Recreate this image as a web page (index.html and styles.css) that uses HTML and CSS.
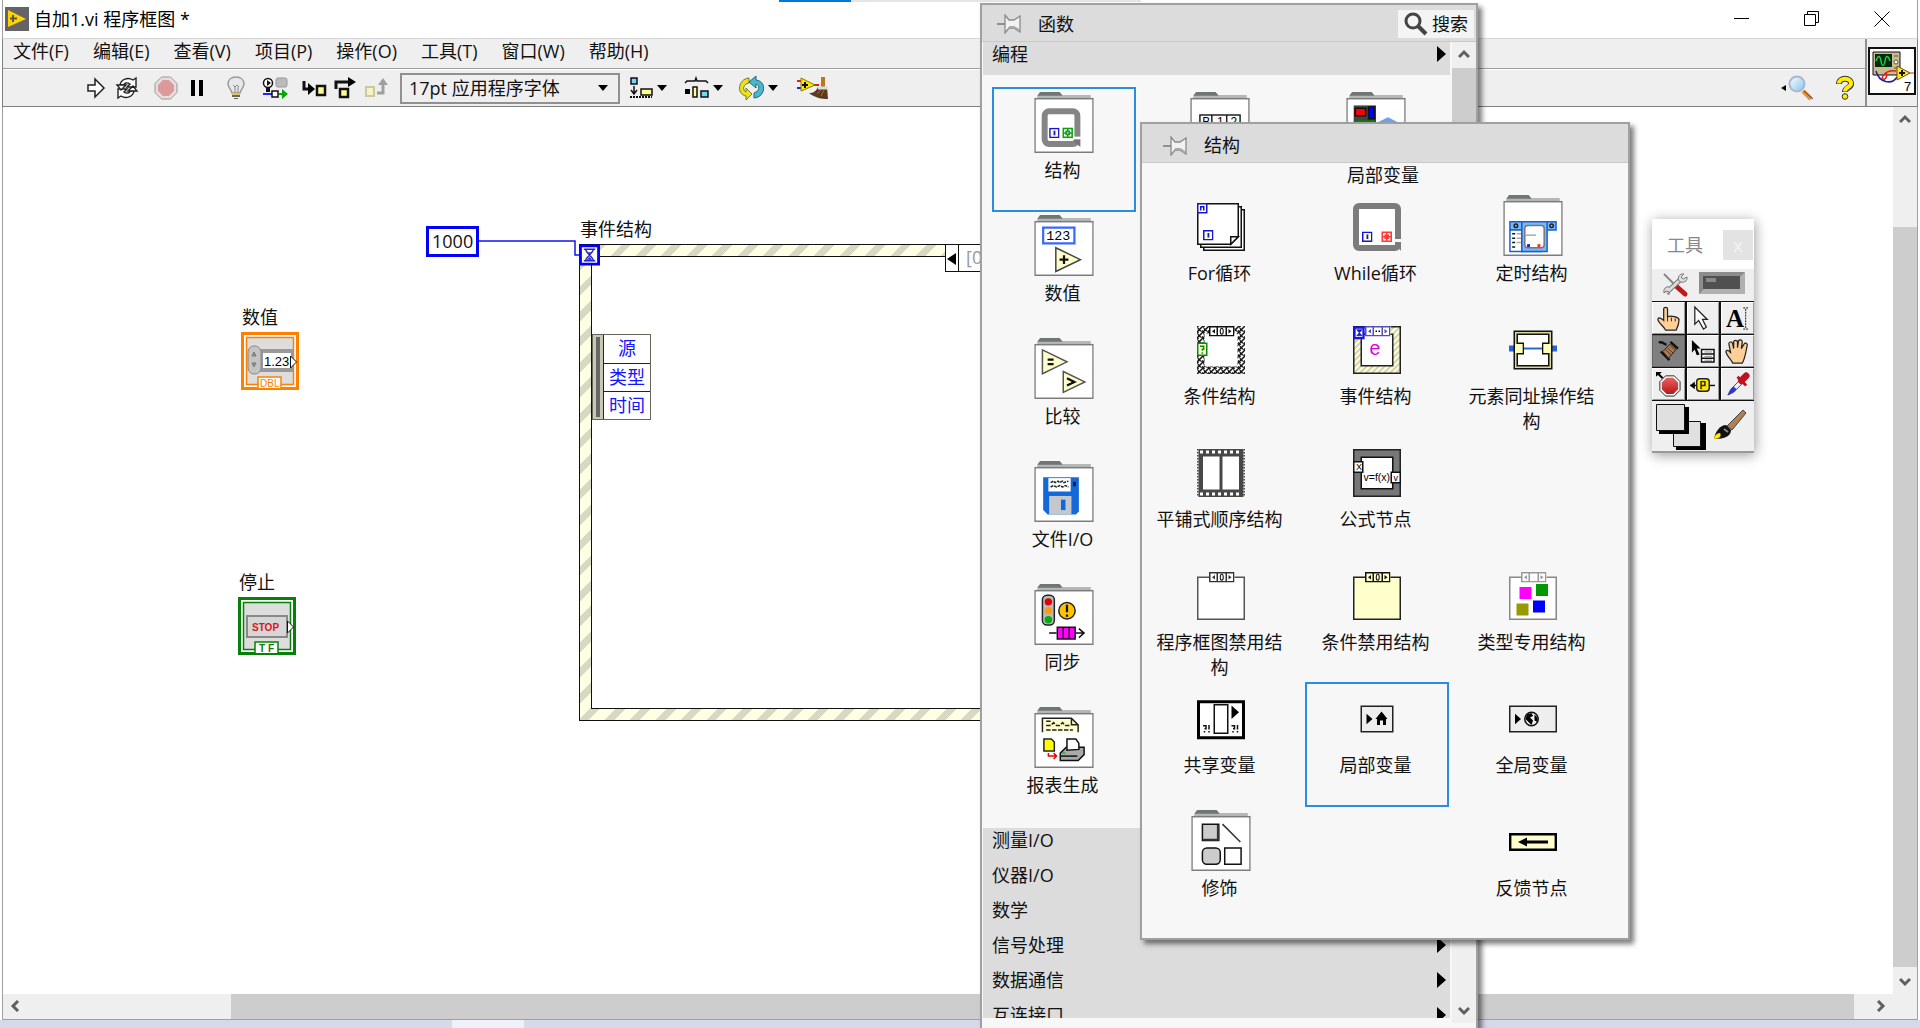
FILE: index.html
```html
<!DOCTYPE html>
<html lang="zh-CN">
<head>
<meta charset="utf-8">
<title>自加1.vi 程序框图 *</title>
<link rel="stylesheet" href="styles.css">
</head>
<body>
<svg class="defs" aria-hidden="true">
  <defs>
    <pattern id="hatch" width="4" height="4" patternUnits="userSpaceOnUse"><rect width="4" height="4" fill="#ffffcc"/><path d="M-1 1L1-1M0 4L4 0M3 5L5 3" stroke="#ccc" stroke-width="1.2"/></pattern>
    <pattern id="knit" width="4" height="4" patternUnits="userSpaceOnUse"><rect width="4" height="4" fill="#fff"/><path d="M0 4L4 0M0 1L1 0M3 4L4 3" stroke="#111" stroke-width="1"/><path d="M0.500 1.500l2 2" stroke="#111" stroke-width=".9"/></pattern>
    <linearGradient id="red" x2="0" y2="1"><stop stop-color="#e86060"/><stop offset="1" stop-color="#b81818"/></linearGradient>
    <linearGradient id="lens" x2="1" y2="1"><stop stop-color="#fff"/><stop offset="1" stop-color="#7cc4ee"/></linearGradient>
  </defs>
  <symbol id="folder" viewBox="0 0 40 41"><path d="M2 3l2-3h13l2 2h19v2H2z" fill="#b4b8b6"/><path d="M2 2.500L4 0h13l2 2.500z" fill="#6f7674"/><rect x=".5" y="4.500" width="39" height="36" fill="#fff" stroke="#7c7c7c"/></symbol>
  <symbol id="ibox" viewBox="0 0 7 7"><path d="M.5.5h6v6h-6z" fill="#ffffcc" stroke="#1414d8"/><path d="M3 2h1.200v3H3z" fill="#1414d8"/></symbol>
  <symbol id="sel" viewBox="0 0 17 7"><path d="M.5.5h16v6H.5zM5.500.5v6M11.500.5v6" fill="none" stroke="currentColor"/><path d="M4 2v3L2 3.500zM13 2v3l2-1.500z" fill="currentColor"/></symbol>
  <symbol id="sand" viewBox="0 0 22 22"><path d="M1.500 1.500h19v19h-19z" fill="#ffffe0" stroke="#00f" stroke-width="3"/><path d="M5 5h12M5 17h12M7 5c0 4 8 8 8 12M15 5c0 4-8 8-8 12" fill="none" stroke="#2222d0" stroke-width="1.500"/><path d="M8 16l3-3 3 3zM9 8h4l-2 2z" fill="#2222d0"/></symbol>
  <symbol id="pin" viewBox="0 0 24 20"><path d="M0 10h8" stroke="#909090" stroke-width="2"/><path d="M8 1v18l4-5h5l6 4V2l-6 4h-5z" fill="#f2f2f2" stroke="#8a8a8a" stroke-width="1.300"/><path d="M12 13h5l5 3" stroke="#aaa" stroke-width="2" fill="none"/></symbol>
  <symbol id="right" viewBox="0 0 9 16"><path d="M0 0l9 8-9 8z"/></symbol>
  <symbol id="down" viewBox="0 0 10 6"><path d="M0 0h10L5 6z"/></symbol>
  <symbol id="chev" viewBox="0 0 12 10"><path d="M1 8l5-5 5 5" fill="none" stroke="#606060" stroke-width="3"/></symbol>
</svg>

<div class="app">
  <header class="titlebar">
    <svg class="logo" viewBox="0 0 24 24"><path fill="#636368" d="M0 0h24v24H0z"/><path d="M3 3l18 9L3 20z" fill="#ffd200"/><path d="M8 8v7M5 11.500h7" stroke="#555" stroke-width="2"/></svg>
    <h1>自加1.vi 程序框图 *</h1>
    <div class="progress"><span></span></div>
    <div class="winbtns">
      <button aria-label="最小化"><svg width="16" height="16"><path d="M0 7.500h15" stroke="#000"/></svg></button>
      <button aria-label="还原"><svg width="16" height="16" fill="none" stroke="#000"><path d="M.5 3.500h11v11H.5zM3.500 3V.5h11v11H12"/></svg></button>
      <button aria-label="关闭"><svg width="16" height="16"><path d="M.5.500l15 15M15.500.500l-15 15" stroke="#000"/></svg></button>
    </div>
  </header>

  <div class="bars">
    <div class="barcol">
      <nav class="menubar">
        <button>文件(F)</button><button>编辑(E)</button><button>查看(V)</button><button>项目(P)</button><button>操作(O)</button><button>工具(T)</button><button>窗口(W)</button><button>帮助(H)</button>
      </nav>
      <div class="toolbar">
        <div class="group">
          <button aria-label="运行"><svg width="20" height="22" viewBox="0 0 20 22"><path d="M2 8h7V2l9 9-9 9v-6H2z" fill="#fff" stroke="#222" stroke-width="1.500"/></svg></button>
          <button aria-label="连续运行"><svg width="26" height="22" viewBox="0 0 26 22" fill="#fff" stroke="#222" stroke-width="1.400"><path d="M6 8c1-6 8-8 13-5l3-2v9h-9l3-3c-3-2-6-1-6 1z"/><path d="M20 14c-1 6-8 8-13 5l-3 2v-9h9l-3 3c3 2 6 1 6-1z"/><path d="M3 8h9l-5 5zM23 14h-9l5-5z"/></svg></button>
        </div>
        <div class="group">
          <button aria-label="中止执行"><svg width="24" height="24" viewBox="0 0 24 24"><path d="M7.500 1h9L23 7.500v9L16.500 23h-9L1 16.500v-9z" fill="#e8dcdc" stroke="#999"/><path d="M9 4h6l5 5v6l-5 5H9l-5-5V9z" fill="#dc9a9a"/></svg></button>
          <button aria-label="暂停"><svg width="14" height="16"><path d="M1 0h4v16H1zM9 0h4v16H9z"/></svg></button>
        </div>
        <div class="group"><button aria-label="高亮显示执行过程"><svg width="20" height="24" viewBox="0 0 20 24"><path d="M10 1c5 0 8 3 8 7 0 3-3 5-4 9H6c-1-4-4-6-4-9 0-4 3-7 8-7z" fill="#e8e8e8" stroke="#999" stroke-width="1.500"/><path d="M7 9l2 2 2-2 2 2M9 11v6M12 11v6" stroke="#888" fill="none"/><path d="M6 17h8v2H6z" fill="#e6c34a"/><path d="M6 19h8v2H6zM8 22h4v1H8z" fill="#666"/></svg></button></div>
        <div class="group"><button aria-label="保存连线值"><svg width="26" height="22" viewBox="0 0 26 22"><circle cx="6" cy="6" r="4.500" fill="#fff" stroke="#111" stroke-width="1.500"/><path d="M5 3v6l4-3zM4 11v4h4v-4" fill="#111"/><rect x="14" y="1" width="11" height="9" rx="2" fill="#bbb" stroke="#999"/><path d="M1 17h9" stroke="#22f" stroke-width="2"/><rect x="10" y="14" width="6" height="6" fill="#fff" stroke="#111" stroke-width="1.500"/><path d="M17 16h3v-4l6 5-6 5v-4h-3z" fill="#0a0"/></svg></button></div>
        <div class="group">
          <button aria-label="单步步入"><svg width="26" height="20" viewBox="0 0 26 20"><path d="M3 3v8h5" stroke="#111" stroke-width="3" fill="none"/><path d="M7 5l7 6-7 6z"/><rect x="16" y="8" width="8" height="9" fill="#ffff90" stroke="#111" stroke-width="2.500"/></svg></button>
          <button aria-label="单步步过"><svg width="24" height="22" viewBox="0 0 24 22"><path d="M3 12V5h13" stroke="#111" stroke-width="3" fill="none"/><path d="M15 0l8 5-8 5z"/><rect x="7" y="12" width="8" height="8" fill="#ffff90" stroke="#111" stroke-width="2.500"/></svg></button>
          <button aria-label="单步步出"><svg width="24" height="20" viewBox="0 0 24 20"><rect x="2" y="9" width="8" height="9" fill="#f6f4c4" stroke="#ccc8a0" stroke-width="2"/><path d="M13 15h6V6" stroke="#a0a0a0" stroke-width="3" fill="none"/><path d="M14 7l5-7 5 7z" fill="#a0a0a0"/></svg></button>
        </div>
        <label class="fontpick"><select aria-label="字体"><option>17pt 应用程序字体</option></select><svg width="10" height="6"><use href="#down"/></svg></label>
        <div class="group wide">
          <button aria-label="对齐对象"><svg width="24" height="22" viewBox="0 0 24 22"><path d="M1 1h6v6H1z" fill="#6cdcf4" stroke="#111" stroke-width="1.500"/><path d="M4 9v7M1 13l3 4 3-4" stroke="#111" stroke-width="1.500" fill="none"/><path d="M11 12h11v6H11z" fill="#ffff90" stroke="#111" stroke-width="1.500"/><path d="M0 20h22" stroke="#111" stroke-width="2" stroke-dasharray="2 1"/></svg><svg width="10" height="6"><use href="#down"/></svg></button>
          <button aria-label="分布对象"><svg width="26" height="22" viewBox="0 0 26 22"><path d="M1 6l2-2h8l1-3 1 3h9l2 2" stroke="#111" stroke-width="1.500" fill="none"/><path d="M1 12h5v5H1z"/><path d="M9 10h4v10H9z" fill="#ffff90" stroke="#111" stroke-width="1.500"/><path d="M17 14h7v6h-7z" fill="#6cdcf4" stroke="#111" stroke-width="1.500"/></svg><svg width="10" height="6"><use href="#down"/></svg></button>
          <button aria-label="重新排序"><svg width="26" height="24" viewBox="0 0 26 24"><path d="M10 2C-1 3-3 18 7 20v4l6-6-6-6v4c-4-2-3-8 3-9z" fill="#e8e020" stroke="#777a20"/><path d="M15 22c12-1 13-17 2-18V0l-7 6 7 6V8c4 1 4 7-2 9z" fill="#4ab8cc" stroke="#20687a"/></svg><svg width="10" height="6"><use href="#down"/></svg></button>
          <button aria-label="整理程序框图"><svg width="32" height="24" viewBox="0 0 32 24"><path d="M0 5h5M15 9h7" stroke="#e02020" stroke-width="2"/><path d="M0 12h5" stroke="#2020e0" stroke-width="2"/><path d="M4 2l14 7L4 15z" fill="#ffe800" stroke="#887700"/><path d="M8 6v6M5 9h6" stroke="#111" stroke-width="2"/><path d="M26 1v10" stroke="#b87820" stroke-width="4"/><path d="M21 11h9l1 12c-6 0-13-1-19-6 5 0 7-2 9-6z" fill="#5c3a1c"/><path d="M21 12h10" stroke="#ddd" stroke-width="3"/><path d="M20 18l4-4M24 20l3-6" stroke="#9a7040"/></svg></button>
        </div>
        <div class="toolright">
          <button aria-label="搜索"><svg width="34" height="26" viewBox="0 0 34 26"><path d="M1 13l5-3v6z"/><path d="M23 16l8 8" stroke="#e09040" stroke-width="4.500"/><path d="M24 16l9 8" stroke="#444"/><circle cx="17" cy="9" r="7.500" fill="url(#lens)" stroke="#a8b8d0" stroke-width="2"/></svg></button>
          <button aria-label="帮助"><svg width="18" height="24" viewBox="0 0 18 24"><path d="M3 8c0-7 12-7 12 0 0 4-6 3-6 8" fill="none" stroke="#333" stroke-width="6"/><path d="M3 7.500c0-6.500 12-6.500 12 0 0 4-6 3-6 8" fill="none" stroke="#ffee00" stroke-width="4"/><circle cx="9" cy="20.500" r="2.800" fill="#ffee00" stroke="#333"/></svg></button>
        </div>
      </div>
    </div>
    <div class="vibox"><svg viewBox="0 0 48 48"><path d="M1 1h46v46H1z" fill="#fff" stroke="#111" stroke-width="2"/><path d="M5 5h27v23H5z" fill="#c8bc90" stroke="#111"/><path d="M7 7h17v13H7z" fill="#052a10"/><path d="M8 14c2-6 4-6 5 0s3 6 4 0 3-6 5 0" fill="none" stroke="#20d040" stroke-width="1.500"/><circle cx="28" cy="15" r="2" fill="#fff" stroke="#555"/><path d="M26 9h4M26 21h4" stroke="#555"/><path d="M8 24c3 12 16 14 21 6" fill="none" stroke="#2020a0" stroke-width="1.500"/><path d="M14 31c2-6 8-8 14-7M14 31c2 3 6 0 4-5" fill="none" stroke="#e02020" stroke-width="1.500"/><path d="M29 19l13 7-13 7z" fill="#ffe820" stroke="#665500"/><path d="M34 23v6M31 26h6" stroke="#111" stroke-width="2"/><path d="M42 26h4" stroke="#e02020"/><text x="36" y="44" class="t13">7</text></svg></div>
  </div>

  <main class="workspace">
    <section class="canvas" aria-label="程序框图">
      <svg class="wire" width="160" height="40"><path d="M0 1h97v14h6" fill="none" stroke="#1414e8" stroke-width="1.500"/></svg>
      <div class="node const">1000</div>
      <div class="node evlabel">事件结构</div>
      <div class="node frame"><div class="inner"></div></div>
      <div class="node selector"><svg width="12" height="26"><path d="M10 8v12L1 14z"/></svg><span>[0]</span></div>
      <svg class="node sand"><use href="#sand"/></svg>
      <div class="node evdata"><i></i><ul><li>源</li><li>类型</li><li>时间</li></ul></div>

      <div class="node num"><span>数值</span>
        <svg width="58" height="58" viewBox="0 0 58 58"><path d="M1.500 1.500h55v55h-55z" fill="#fff" stroke="#ff8000" stroke-width="3"/><path d="M5.500 5.500h47v47h-47z" fill="#ddd" stroke="#ff8000" stroke-width="1.500"/><rect x="16" y="17" width="36" height="23" fill="#999"/><rect x="7" y="14" width="13" height="28" rx="6" fill="#c4c4c4" stroke="#888"/><path d="M11 24l2-4 2 4zM11 31l2 4 2-4z" fill="#999" stroke="#777"/><path d="M22 21h28v15H22z" fill="#fff"/><text x="23" y="34" class="t13">1.23</text><path d="M49.500 24v12l6-6z" fill="#fff" stroke="#111"/><path d="M17 56V45h23v11" fill="#fff" stroke="#ff8000" stroke-width="1.500"/><text x="19" y="55" class="t10 or">DBL</text></svg></div>
      <div class="node stop"><span>停止</span>
        <svg width="58" height="58" viewBox="0 0 58 58"><path d="M1.500 1.500h55v55h-55z" fill="#fff" stroke="#078007" stroke-width="3"/><path d="M5.500 5.500h47v47h-47z" fill="#ddd" stroke="#078007" stroke-width="1.500"/><path d="M9 19h40v21H9z" fill="#d6d6d6" stroke="#888" stroke-width="2"/><text x="14" y="34" class="t10 bold rd">STOP</text><path d="M49.500 24v12l6-6z" fill="#fff" stroke="#111"/><path d="M17 56V45h23v11" fill="#fff" stroke="#078007" stroke-width="1.500"/><text x="21" y="55" class="t10 bold gr">T F</text></svg></div>
    </section>
    <div class="vscroll"><b><svg width="12" height="10"><use href="#chev"/></svg></b><i></i><b><svg class="r180" width="12" height="10"><use href="#chev"/></svg></b></div>
    <div class="hscroll"><b><svg class="r270" width="12" height="10"><use href="#chev"/></svg></b><i></i><b><svg class="r90" width="12" height="10"><use href="#chev"/></svg></b></div>
  </main>
  <footer class="taskbar"><i></i></footer>
</div>

<aside class="palette functions" aria-label="函数">
  <header><svg width="24" height="20"><use href="#pin"/></svg><h2>函数</h2>
    <button class="search"><svg width="24" height="24" viewBox="0 0 24 24"><circle cx="9" cy="9" r="7" fill="none" stroke="#444" stroke-width="3"/><path d="M14 14l8 8" stroke="#444" stroke-width="4"/></svg>搜索</button></header>
  <div class="fbody">
    <div class="fmain">
      <button class="cat first"><span>编程</span><svg width="9" height="16"><use href="#right"/></svg></button>
      <div class="cells">
        <button class="cell on"><svg viewBox="0 0 40 41"><use href="#folder" width="40" height="41"/><rect x="7" y="13" width="22" height="22" rx="3" fill="#fff" stroke="#858585" stroke-width="4"/><path d="M26 30h6v2h-6z" fill="#fff"/><path d="M27 32h4v5l-5-4z" fill="#777"/><use href="#ibox" x="10" y="24" width="7" height="7"/><path d="M19 24h7v7h-7z" fill="#10a010"/><path d="M20.500 27v-1.500H22M23 25.500h1.500V27M24.500 28v1.500H23M22 29.500h-1.500V28M22 27.500h1" stroke="#fff" fill="none" stroke-width=".9"/></svg><span>结构</span></button>
        <button class="cell" aria-label="数组"><svg viewBox="0 0 40 41"><use href="#folder" width="40" height="41"/><path d="M6.500 15.500h27v10h-27zM14.500 15v10M24.500 15v10" fill="#fff" stroke="#222"/><text x="8" y="23" class="t8">B</text><text x="18" y="23" class="t8">1</text><text x="27" y="23" class="t8">2</text></svg></button>
        <button class="cell" aria-label="簇"><svg viewBox="0 0 40 41"><use href="#folder" width="40" height="41"/><path d="M5 9h15v20H5z" fill="#444"/><path d="M6 11h7v5H6z" fill="#f00" stroke="#111"/><path d="M15 10h4v8h-4z" fill="#00f" stroke="#111"/><path d="M6 19h13v4H6z" fill="#080"/><path d="M22 20l6-3 6 3v6H22z" fill="#6aa4f0"/></svg></button>
        <button class="cell"><svg viewBox="0 0 40 41"><use href="#folder" width="40" height="41"/><path d="M6 8.500h21v10.500H6z" fill="#fff" stroke="#3868ff" stroke-width="1.500"/><text x="8" y="17" class="t9 mono">123</text><path d="M14.500 22v16L31 30z" fill="#ffffcc" stroke="#444"/><path d="M20 27v6M17 30h6" stroke="#111" stroke-width="1.500"/></svg><span>数值</span></button>
        <i></i><i></i>
        <button class="cell"><svg viewBox="0 0 40 41"><use href="#folder" width="40" height="41"/><path d="M5.500 8v16L22 16z" fill="#ffffcc" stroke="#555"/><path d="M9 14.500h4M9 17.500h4" stroke="#111" stroke-width="1.500"/><path d="M19.500 22.500v14L34 29.500z" fill="#ffffcc" stroke="#555"/><path d="M22 27l5 2.500-5 2.500" fill="none" stroke="#111" stroke-width="1.500"/></svg><span>比较</span></button>
        <i></i><i></i>
        <button class="cell"><svg viewBox="0 0 40 41"><use href="#folder" width="40" height="41"/><path d="M6 11h24v23l-2 2H9l-3-3z" fill="#1468d8"/><path d="M9.500 11.500h15v9h-15z" fill="#fff"/><path d="M11 14.500l2-1 1 1 2-1 1 1 2-1 1 1 3-1M11 17.500l2-1 2 1 2-1 2 1 2-1 2 1" stroke="#222" fill="none" stroke-dasharray="2 .6"/><path d="M10 23.500h15V36H10z" fill="#c4c8cc"/><path d="M18 26h3v7h-3z" fill="#1468d8"/><path d="M26 14h2v3h-2z" fill="#124"/></svg><span>文件I/O</span></button>
        <i></i><i></i>
        <button class="cell"><svg viewBox="0 0 40 41"><use href="#folder" width="40" height="41"/><rect x="5.500" y="7.500" width="8" height="20" rx="3" fill="#bbb" stroke="#222"/><circle cx="9.500" cy="12" r="2.500" fill="#e00000"/><circle cx="9.500" cy="18" r="2.500" fill="#ff9a10"/><circle cx="9.500" cy="24" r="2.500" fill="#00b010"/><circle cx="22" cy="18" r="5.500" fill="#ffc400" stroke="#222"/><path d="M22 14v5M22 20.500v1.500" stroke="#111" stroke-width="1.500"/><path d="M10 33h5M28 33h5M30 30l3.500 3-3.500 3" stroke="#111" fill="none"/><path d="M15.500 29h12v8h-12zM19.500 29v8M23.500 29v8" fill="#f0f" stroke="#111"/></svg><span>同步</span></button>
        <i></i><i></i>
        <button class="cell"><svg viewBox="0 0 40 41"><use href="#folder" width="40" height="41"/><path d="M5.500 17V7.500H25l4.500 4.500v5z" fill="#ffffcc"/><path d="M5.500 17V7.500H25l4.500 4.500v5M25 7.500V12h4.500" fill="none" stroke="#222"/><path d="M8 9.500h3M8 12.500h3l2-2 2 2h2l2-2 2 2h3M8 15.500h18" stroke="#222" stroke-dasharray="3 1" fill="none"/><path d="M6.500 21.500h5l2 2v6h-7z" fill="#ff0" stroke="#222"/><path d="M9.500 31v2h5M13 31l2 2-2 2" stroke="#e00" fill="none"/><path d="M17.500 31l4-4h12v5l-4 4h-12z" fill="#aaa" stroke="#111"/><path d="M22 29v-7.500h6l2 3v4z" fill="#fff" stroke="#111"/><path d="M18 33h11" stroke="#111"/><path d="M19 31h2" stroke="#0c0"/></svg><span>报表生成</span></button>
      </div>
      <button class="cat"><span>测量I/O</span><svg width="9" height="16"><use href="#right"/></svg></button>
      <button class="cat"><span>仪器I/O</span><svg width="9" height="16"><use href="#right"/></svg></button>
      <button class="cat"><span>数学</span><svg width="9" height="16"><use href="#right"/></svg></button>
      <button class="cat"><span>信号处理</span><svg width="9" height="16"><use href="#right"/></svg></button>
      <button class="cat"><span>数据通信</span><svg width="9" height="16"><use href="#right"/></svg></button>
      <button class="cat"><span>互连接口</span><svg width="9" height="16"><use href="#right"/></svg></button>
    </div>
    <div class="vscroll pscroll"><b><svg width="12" height="10"><use href="#chev"/></svg></b><i></i><b><svg class="r180" width="12" height="10"><use href="#chev"/></svg></b></div>
  </div>
</aside>

<aside class="palette structures" aria-label="结构">
  <header><svg width="24" height="20"><use href="#pin"/></svg><h2>结构</h2></header>
  <p class="hint">局部变量</p>
  <div class="cells">
    <button class="cell"><svg class="s" viewBox="0 0 32 32"><path d="M4.500 4.500h27v27h-27z" fill="#fff" stroke="#111"/><path d="M2.500 2.500h27v27h-27z" fill="#fff" stroke="#111"/><path d="M.5.5h27v22l-5 5H.5z" fill="#fff" stroke="#111"/><path d="M27.500 22.500h-5v5z" fill="#fff" stroke="#111"/><path d="M.5.5h6v6h-6z" fill="#ffffcc" stroke="#1414d8"/><path d="M2.500 5V2.500h2V5" fill="none" stroke="#1414d8"/><use href="#ibox" x="4" y="18" width="7" height="7"/></svg><span>For循环</span></button>
    <button class="cell"><svg class="s" viewBox="0 0 32 32"><rect x="2" y="2" width="28" height="28" rx="2" fill="#fff" stroke="#7c7c7c" stroke-width="4"/><path d="M27 24h5v2h-5z" fill="#f7f7f7"/><path d="M28 27h4v5z" fill="#7c7c7c"/><use href="#ibox" x="6" y="19" width="7" height="7"/><path d="M19 19h7v7h-7z" fill="#ff3838"/><path d="M20.500 22v-1.500H22M23 20.500h1.500V22M24.500 23v1.500H23M22 24.500h-1.500V23" stroke="#fff" stroke-width=".9" fill="none"/></svg><span>While循环</span></button>
    <button class="cell"><svg viewBox="0 0 40 41"><use href="#folder" width="40" height="41"/><path d="M4.500 18h31v5.500h-31z" fill="#7ab8f4" stroke="#1860d8"/><path d="M4.500 23.500h8V38h-8z" fill="#fff" stroke="#1860d8"/><path d="M6 26h2M6 29h2M6 32h2M6 35h2" stroke="#111"/><path d="M9 26h3M9 29h3M9 32h3" stroke="#aaa"/><path d="M12.500 18h13v20h-13z" fill="#7ab8f4" stroke="#1860d8"/><path d="M12.500 18h17v20h-17z" fill="#7ab8f4" stroke="#1860d8"/><rect x="14.500" y="20.500" width="13" height="15" rx="2" fill="#fff" stroke="#777"/><path d="M15 27h7" stroke="#aaa"/><path d="M16 33h2v2h-2z" fill="#22d"/><path d="M23 33h2v2h-2z" fill="#f33"/><circle cx="8.500" cy="20.700" r="1.200" fill="none" stroke="#222"/><circle cx="32.500" cy="20.700" r="1.200" fill="none" stroke="#222"/></svg><span>定时结构</span></button>

    <button class="cell"><svg class="s" viewBox="0 0 32 32"><path d="M0 0h32v32H0z" fill="url(#knit)"/><path d="M5 5h22v22H5z" fill="#fff"/><path d="M8 0h17v7H8z" fill="#fff"/><use href="#sel" x="8" width="17" height="7"/><ellipse cx="16.500" cy="3.500" rx="1" ry="2" fill="none" stroke="#111" stroke-width=".7"/><path d="M.5 11.500h6v8h-6z" fill="#ffffcc" stroke="#0a8a0a"/><path d="M2 13.500h2.500v2H3.500v1M3.500 17.500v1" stroke="#0a8a0a" fill="none" stroke-width=".9"/></svg><span>条件结构</span></button>
    <button class="cell"><svg class="s" viewBox="0 0 32 32"><path d="M.5.5h31v31H.5z" fill="url(#hatch)" stroke="#222"/><path d="M5.500 5.500h21v21h-21z" fill="#fff" stroke="#222"/><path d="M8 0h17v7H8z" fill="#fff"/><g color="#5050b8"><use href="#sel" x="8" width="17" height="7"/></g><path d="M15 3h1v1h-1zM17 3h1v1h-1z"/><path d="M1 1h6v7H1z" fill="#ffffcc" stroke="#1414f0" stroke-width="1.500"/><path d="M2.500 2.500h3.500L2.500 6.500H6z" fill="#1414f0" stroke="#1414f0" stroke-width=".5"/><text x="11" y="19" class="t13 mg">e</text></svg><span>事件结构</span></button>
    <button class="cell"><svg class="s" viewBox="0 0 32 32"><path d="M0 13h32v4H0z" fill="#2a64d8"/><path d="M3.500 3.500h25v25h-25z" fill="#d8d89c" stroke="#111"/><path d="M5.500 5.500h21v6h-4v7h4v8h-21v-8h4v-7h-4z" fill="#fff" stroke="#111"/><path d="M4 12h5v6H4zM23 12h5v6h-5z" fill="#ffffb8"/><path d="M10 15h12" stroke="#2a64d8" stroke-width="1.300"/></svg><span>元素同址操作结构</span></button>

    <button class="cell"><svg class="s" viewBox="0 0 32 32"><path d="M1 0h30v32H1z" fill="#484848"/><path d="M.5 0v32M31.500 0v32" stroke="#484848" stroke-dasharray="1 1"/><path d="M2 2h28M2 30h28" stroke="#fff" stroke-width="2" stroke-dasharray="2 2"/><path d="M4 5h11v22H4zM17 5h11v22H17z" fill="#fff"/></svg><span>平铺式顺序结构</span></button>
    <button class="cell"><svg class="s" viewBox="0 0 32 32"><path d="M.5.5h31v31H.5z" fill="#777" stroke="#222"/><path d="M5.500 5.500h21v21h-21z" fill="#fff" stroke="#111"/><path d="M.5 8.500h6v7h-6zM25.500 15.500h6v7h-6z" fill="#fff" stroke="#111"/><text x="2" y="14" class="t6">X</text><text x="7" y="21" class="t7">v=f(x)</text><text x="27" y="21" class="t6">v</text></svg><span>公式节点</span></button>
    <i></i>

    <button class="cell"><svg class="s" viewBox="0 0 32 32" color="#333"><path d="M.5 3.500h31v28H.5z" fill="#fff" stroke="#555"/><path d="M8 0h17v7H8z" fill="#fff"/><use href="#sel" x="8" width="17" height="7"/><ellipse cx="16.500" cy="3.500" rx="1" ry="2" fill="none" stroke="#111" stroke-width=".7"/></svg><span>程序框图禁用结构</span></button>
    <button class="cell"><svg class="s" viewBox="0 0 32 32" color="#111"><path d="M.5 3.500h31v28H.5z" fill="#ffffcc" stroke="#222"/><path d="M8 0h17v7H8z" fill="#ffffcc"/><use href="#sel" x="8" width="17" height="7"/><ellipse cx="16.500" cy="3.500" rx="1" ry="2" fill="none" stroke="#111" stroke-width=".7"/></svg><span>条件禁用结构</span></button>
    <button class="cell"><svg class="s" viewBox="0 0 32 32" color="#999"><path d="M.5 3.500h31v28H.5z" fill="#fff" stroke="#888"/><path d="M8 0h17v7H8z" fill="#fff"/><use href="#sel" x="8" width="17" height="7"/><path d="M7 10h8v8H7z" fill="#f0f"/><path d="M18 8h8v8h-8z" fill="#009800"/><path d="M5 21h8v8H5z" fill="#989800"/><path d="M16 19h8v8h-8z" fill="#00f"/></svg><span>类型专用结构</span></button>

    <button class="cell"><svg class="s" viewBox="0 0 32 32"><path d="M1 4.500h30v24H1z" fill="#fff" stroke="#000" stroke-width="2"/><path d="M11.500 6.500h9v19h-9z" fill="#fff" stroke="#111"/><path d="M23 7v9l5-4.500z"/><path d="M4 20.500h2v2H5M5 24v1M8 20v3M8 24v1M23 20.500h2v2h-1M24 24v1M27 20v3M27 24v1" stroke="#111" fill="none"/></svg><span>共享变量</span></button>
    <button class="cell on"><svg class="s" viewBox="0 0 32 32"><path d="M5.500 7.500h21v17h-21z" fill="#eee" stroke="#222"/><path d="M9 12.500v7l4-3.500zM15 16l4-5 4 5h-1v4h-2v-3h-2v3h-2v-4z"/></svg><span>局部变量</span></button>
    <button class="cell"><svg class="s" viewBox="0 0 32 32"><path d="M.5 7.500h31v17H.5z" fill="#eee" stroke="#222"/><path d="M4 12.500v7l4-3.500z"/><circle cx="15" cy="16" r="4.500" fill="#eee" stroke="#111"/><path d="M12 13l3-1 1 2-2 1 2 2-1 3-2-2-2-2zM17 13l2 2v3l-2-1z"/></svg><span>全局变量</span></button>

    <button class="cell"><svg viewBox="0 0 40 41"><use href="#folder" width="40" height="41"/><path d="M7.500 9.500h11v11h-11z" fill="#ccc" stroke="#111"/><path d="M18 10v10H8" fill="none" stroke="#333" stroke-width="1.500"/><path d="M21 9.500l12 12" stroke="#333"/><rect x="7.500" y="25.500" width="12" height="11" rx="3" fill="#ccc" stroke="#111"/><path d="M22.500 25.500h11v11h-11z" fill="#fff" stroke="#111"/></svg><span>修饰</span></button>
    <i></i>
    <button class="cell"><svg class="s" viewBox="0 0 32 32"><path d="M.8 10.800h30.400v10.400H.8z" fill="#ffffcc" stroke="#000" stroke-width="1.600"/><path d="M6 16l6-3v2h14v2H12v2z"/></svg><span>反馈节点</span></button>
  </div>
</aside>

<aside class="tools" aria-label="工具">
  <header><h2>工具</h2><button aria-label="关闭工具">x</button></header>
  <div class="auto">
    <svg width="26" height="24" viewBox="0 0 26 24"><path d="M2 2l12 12" stroke="#888" stroke-width="2"/><path d="M14 14l9 8" stroke="#c01818" stroke-width="5" stroke-linecap="round"/><path d="M4 21L19 7" stroke="#777" stroke-width="5"/><path d="M4 21L19 7" stroke="#ddd" stroke-width="3"/><path d="M17 9c-2-4 1-8 5-7l-3 3 2 2 4-2c1 4-4 7-8 4zM7 15c-3-1-6 2-5 6l2-2 3 1v3" fill="#ddd" stroke="#777"/></svg>
    <svg width="46" height="22"><path d="M0 0h46v22H0z" fill="#b0b0b0"/><path d="M0 0h46l-4 4H4v14l-4 4z" fill="#8c8c8c"/><path d="M4 4h37v13H4z" fill="#505050"/><path d="M7 6h10v4H7z" fill="#888"/></svg>
  </div>
  <div class="toolgrid">
    <button aria-label="操作值"><svg viewBox="0 0 26 26"><path d="M8 15V3c0-2 4-2 4 0v8c4-1 11 0 12 3 0 4-1 7-3 11H10c-2-4-8-8-8-11 0-3 4-1 6 1z" fill="#ffcf98" stroke="#222" stroke-width="1.300"/><path d="M12 11v5M16 12v4M20 13v3" stroke="#222"/></svg></button>
    <button aria-label="定位"><svg viewBox="0 0 26 26"><path d="M5 1v18l4-4 5 9 3-2-4-8h5z" fill="#fff" stroke="#222" stroke-width="1.300"/></svg></button>
    <button aria-label="编辑文本"><svg viewBox="0 0 26 26"><text x="1" y="22" class="t26 serif">A</text><path d="M19 2h5M19 24h5M21.500 3v20" stroke="#111" stroke-dasharray="2 1"/></svg></button>
    <button class="down" aria-label="连线"><svg viewBox="0 0 26 26"><path d="M3 4c3-2 5 1 8 2M15 3l8 7M5 13l9 9" stroke="#111" stroke-width="2.500" fill="none"/><path d="M15 5l6 6-8 9-6-7z" fill="#a87850" stroke="#222"/><path d="M12 9l6 6M10 11l6 6M15 7l5 5" stroke="#603c20"/></svg></button>
    <button aria-label="快捷菜单"><svg viewBox="0 0 26 26"><path d="M2 1l9 9-4 0 3 6-3 1-2-6-3 3z"/><path d="M12 11h13v13H12zM12 15.500h13M12 20h13" fill="#fff" stroke="#111" stroke-width="1.500"/><path d="M15 13.500h8M15 18h8M15 22h8" stroke="#888"/></svg></button>
    <button aria-label="滚动窗口"><svg viewBox="0 0 26 26"><path d="M8 25c-2-5-7-8-7-12 1-2 4-1 5 2L4 5c0-2 3-3 4 0l1 5V3c0-2 4-2 4 0v6l1-7c1-2 4-1 4 1l-1 7 3-5c1-2 4 0 3 2-1 5-2 13-5 18z" fill="#ffcf98" stroke="#222" stroke-width="1.300"/></svg></button>
    <button aria-label="断点"><svg viewBox="0 0 26 26"><path d="M0 0h6L4 2l4 4-2 1-4-4-2 2z"/><path d="M10 4h9l6 6v9l-6 6h-9l-6-6v-9z" fill="#fff" stroke="#222"/><path d="M11 6h7l5 5v7l-5 5h-7l-5-5v-7z" fill="url(#red)"/></svg></button>
    <button aria-label="探针"><svg viewBox="0 0 26 26"><path d="M0 14h26" stroke="#111" stroke-width="1.500"/><path d="M0 14l5-4v8z"/><rect x="7" y="7" width="13" height="13" rx="3" fill="#ffe800" stroke="#222" stroke-width="1.500"/><path d="M11.500 18v-8h4v4h-4" fill="none" stroke="#222" stroke-width="1.500"/></svg></button>
    <button aria-label="获取颜色"><svg viewBox="0 0 26 26"><path d="M3 24l3-6L17 7l3 3L9 21z" fill="#f4f4ff" stroke="#444"/><path d="M3 24l3-6 3-3 3 3-3 3z" fill="#2838e0"/><path d="M13 5l9 9" stroke="#c01020" stroke-width="3"/><path d="M17 9l5-5" stroke="#c01020" stroke-width="7" stroke-linecap="round"/></svg></button>
  </div>
  <button class="paint" aria-label="设置颜色"><svg width="102" height="51"><path d="M24 22h30v27H24z"/><path d="M21.500 20.500h27v25h-27z" fill="#e0e0e0" stroke="#111"/><path d="M7 6h30v27H7z"/><path d="M4.500 3.500h28v26h-28z" fill="#e0e0e0" stroke="#111"/><path d="M75 25l16-16 3 3-14 17z" fill="#b08050" stroke="#444"/><path d="M62 38c1-7 6-14 12-14l5 5c0 6-6 9-17 9z" fill="#111"/><path d="M62 38c0-3 3-6 6-6 2 3-1 6-6 6z" fill="#ffe800"/><path d="M72 28l4 3" stroke="#888" stroke-width="2"/></svg></button>
</aside>
</body>
</html>
```
FILE: styles.css
```css
* { box-sizing: border-box; }

body {
  margin: 0;
  height: 100vh;
  overflow: hidden;
  position: relative;
  background: #fff;
  color: #111;
  font: 18px/25px "Open Sans", "Noto Sans CJK SC", sans-serif;
}

button {
  margin: 0;
  padding: 0;
  border: 0;
  background: none;
  color: inherit;
  font: inherit;
}

svg { display: block; flex: none; overflow: visible; }
h1, h2, p, ul { margin: 0; padding: 0; font-size: 18px; font-weight: 400; }
.defs { position: absolute; width: 0; height: 0; }

/* lettering inside icons */
.t6, .t7, .t8, .t9, .t10, .t13 { font-family: "Liberation Sans", sans-serif; }
.t6 { font-size: 6px; }
.t7 { font-size: 7px; }
.t8 { font-size: 8px; }
.t9 { font-size: 9px; }
.t10 { font-size: 10px; }
.t13 { font-size: 13px; }
.t26 { font-size: 26px; font-weight: 700; }
.bold { font-weight: 700; }
.mono { font-family: "Liberation Mono", monospace; }
.serif { font-family: "Liberation Serif", serif; }
.or { fill: #ff8000; }
.gr { fill: #078007; }
.rd { fill: #d81820; }
.mg { fill: #e000e0; }

/* main window */
.app {
  display: flex;
  flex-direction: column;
  height: 100%;
}

.titlebar {
  display: flex;
  align-items: center;
  height: 38px;
  padding-left: 2px;
  margin: 0 2px;
  border-left: 1px solid #a0a0a0;
  border-right: 1px solid #a0a0a0;
  position: relative;
}
.titlebar h1 { margin-left: 5px; color: #000; }
.logo { width: 24px; height: 24px; }
.progress {
  position: absolute;
  top: 0;
  left: 776px;
  width: 362px;
  height: 2px;
  background: #e5e5e5;
}
.progress span { display: block; width: 72px; height: 2px; background: #0078d7; }
.winbtns { display: flex; margin-left: auto; }
.winbtns button { width: 70px; display: flex; justify-content: center; }

.bars {
  display: flex;
  margin: 0 2px;
  border: 1px solid #808080;
  border-top-color: #d8d8d8;
  background: #efefef;
}
.barcol { flex: 1; }
.menubar {
  display: flex;
  gap: 24px;
  height: 30px;
  padding: 0 0 4px 10px;
  align-items: center;
  border-bottom: 1px solid #a0a0a0;
}
.toolbar { display: flex; align-items: center; height: 37px; padding-left: 78px; border-top: 1px solid #fff; }
.group { display: flex; gap: 1px; margin-right: 9px; }
.group button { width: 30px; height: 30px; display: flex; align-items: center; justify-content: center; gap: 3px; }
.group.wide { gap: 15px; margin-left: 8px; }
.group.wide button { width: 40px; }
.fontpick { position: relative; width: 220px; height: 31px; }
.fontpick select {
  appearance: none;
  width: 100%;
  height: 100%;
  padding: 0 7px;
  border: 2px solid #909090;
  border-radius: 0;
  background: #efefef;
  color: #111;
  font: inherit;
}
.fontpick svg { position: absolute; right: 12px; top: 12px; }
.toolright { display: flex; align-items: center; gap: 22px; margin-left: auto; padding-right: 11px; }
.vibox { width: 52px; padding: 8px 1px; border-left: 2px solid #909090; }
.vibox svg { width: 48px; height: 48px; }

/* block diagram */
.workspace {
  flex: 1;
  min-height: 0;
  display: grid;
  grid-template: 1fr 25px / 1fr 24px;
  margin: 0 2px;
  border: 1px solid #a0a0a0;
  border-top: 0;
  background: #efefef;
}
.canvas { position: relative; overflow: hidden; background: #fff; }
.vscroll, .hscroll { display: flex; background: #efefef; }
.vscroll { flex-direction: column; }
.vscroll b, .hscroll b { width: 24px; height: 24px; display: flex; align-items: center; justify-content: center; }
.vscroll i, .hscroll i { flex: 1; background: #cdcdcd; }
.vscroll i { margin: 96px 0 3px; }
.hscroll i { margin: 0 15px 0 204px; }
.r90 { transform: rotate(90deg); }
.r180 { transform: rotate(180deg); }
.r270 { transform: rotate(270deg); }
.taskbar { height: 8px; background: #d4daea; padding-left: 452px; }
.taskbar i { display: block; width: 72px; height: 8px; background: #eef1f8; }

.node { position: absolute; }
.const {
  left: 423px;
  top: 119px;
  height: 31px;
  padding: 0 3px;
  border: 3px solid #00f;
  background: #fff;
}
.wire { position: absolute; left: 475px; top: 133px; }
.evlabel { left: 577px; top: 110px; }
.frame {
  left: 576px;
  top: 137px;
  width: 700px;
  height: 477px;
  padding: 11px;
  border: 1px solid #111;
  background: repeating-linear-gradient(135deg, #ffffe4 0 11px, #d8d8c4 11px 18px);
}
.frame .inner { height: 100%; border: 1px solid #111; background: #fff; }
.selector {
  left: 942px;
  top: 137px;
  display: flex;
  width: 200px;
  height: 28px;
  border: 1px solid #111;
  background: #fff;
  color: #999;
}
.selector span { padding-left: 7px; border-left: 1px solid #111; }
.sand { left: 576px; top: 137px; width: 21px; height: 22px; }
.evdata { left: 589px; top: 227px; display: flex; border: 1px solid #66665a; background: #c8c8b4; }
.evdata i { width: 4px; margin: 2px 3px; background: #666; }
.evdata ul { list-style: none; background: #fff; border-left: 1px solid #222; }
.evdata li { width: 46px; height: 28px; line-height: 27px; text-align: center; color: #1414ff; }
.evdata li + li { border-top: 1px solid #222; }
.num { left: 238px; top: 198px; }
.stop { left: 235px; top: 463px; }
.num span, .stop span { display: block; padding-left: 1px; margin-bottom: 2px; }

/* palettes */
.palette { position: absolute; border: 2px solid #a0a0a0; background: #f7f7f7; box-shadow: 4px 4px 5px rgba(0, 0, 0, .5); }
.palette header {
  display: flex;
  align-items: center;
  height: 37px;
  padding: 2px 0 0 15px;
  background: #dcdcdc;
  border-bottom: 1px solid #c8c8c8;
}
.palette h2 { margin-left: 17px; }
.functions { left: 980px; top: 3px; bottom: 0; width: 498px; display: flex; flex-direction: column; border-bottom: 0; }
.search { display: flex; align-items: center; gap: 4px; height: 28px; margin: 0 2px 0 auto; padding: 0 6px; background: #f4f4f4; }
.fbody { flex: 1; min-height: 0; display: flex; padding-bottom: 5px; }
.fmain { flex: 1; overflow: hidden; margin: 0 2px 5px 1px; }
.cat { display: flex; justify-content: space-between; width: 100%; height: 35px; padding: 0 4px 0 9px; background: #dcdcdc; text-align: left; }
.cat svg { margin-top: 4px; }
.first { height: 33px; }
.pscroll { width: 24px; }
.pscroll i { flex: none; height: 520px; margin: 2px 0 auto; }

.cells { display: grid; grid-template-columns: repeat(3, 144px); grid-auto-rows: 123px; column-gap: 12px; }
.functions .cells { padding: 12px 9px 3px; }
.cell { height: 125px; display: flex; flex-direction: column; align-items: center; padding-top: 4px; border: 1px solid transparent; }
.on { border: 2px solid #2a8ee0; padding-top: 3px; }
.cell svg { width: 60px; height: 61px; margin-bottom: 5px; }
.cell .s { width: 48px; height: 48px; margin: 8px 0 10px; }
.cell span { width: 132px; margin-right: 3px; text-align: center; }

.structures { left: 1140px; top: 122px; width: 490px; height: 818px; }
.structures header { height: 39px; padding: 5px 0 0 21px; }
.hint { height: 27px; padding-right: 4px; text-align: center; }
.structures .cells { padding-left: 7px; }

.tools { position: absolute; left: 1652px; top: 219px; width: 102px; background: #efefef; box-shadow: 1px 2px 12px rgba(0, 0, 0, .4); }
.tools header { display: flex; align-items: center; justify-content: space-between; height: 50px; padding: 2px 1px 0 15px; background: #fff; color: #888; }
.tools header button { width: 30px; height: 30px; background: #e3e3e3; color: #f4f4f4; }
.auto { display: flex; justify-content: space-between; height: 32px; padding: 3px 9px 0 10px; }
.toolgrid { display: grid; grid-template-columns: repeat(3, 1fr); grid-auto-rows: 32px; gap: 1px 2px; border: solid #111; border-width: 1px 0; background: #111; }
.toolgrid button { display: flex; align-items: center; justify-content: center; background: #efefef; border: 1px solid; border-color: #fff #999 #999 #fff; }
.toolgrid .down { background: #808080; border-color: #666; }
.toolgrid svg { width: 25px; height: 25px; }
.paint { display: block; height: 52px; border-bottom: 2px solid #999; }
```
